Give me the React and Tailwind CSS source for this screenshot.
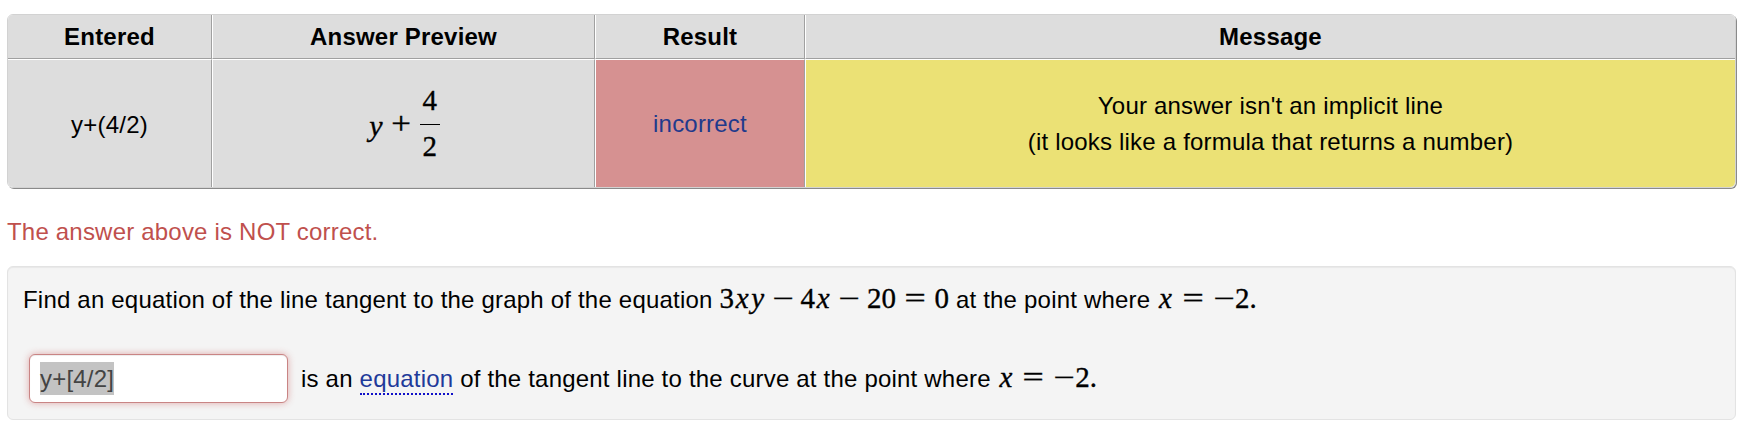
import React from "react";

const Var = ({ children, w }) => (
  <span className={"inline-block italic text-center " + w}>{children}</span>
);
const Bin = ({ children }) => (
  <span className="inline-block w-[0.778em] mx-[0.222em] text-center">
    <span className="inline-block scale-x-[1.3]">{children}</span>
  </span>
);
const Rel = ({ children }) => (
  <span className="inline-block w-[0.778em] mx-[0.278em] text-center">
    <span className="inline-block scale-x-[1.3]">{children}</span>
  </span>
);
const Neg = () => (
  <span className="inline-block w-[0.778em] text-center">
    <span className="inline-block scale-x-[1.3]">−</span>
  </span>
);

function Math({ children }) {
  return (
    <span className="font-['Liberation_Serif','Times_New_Roman',serif] text-[29px] leading-none whitespace-nowrap tracking-normal [-webkit-text-stroke:0.35px_black]">
      {children}
    </span>
  );
}

const X = () => <Var w="w-[0.572em]">x</Var>;
const Y = () => <Var w="w-[0.5em]">y</Var>;

export default function App() {
  return (
    <div className="w-[1744px] h-[424px] bg-white pt-[14px] pl-[7px] pr-[8px] font-['Liberation_Sans',Arial,sans-serif] text-[24px] tracking-[0.2px] text-black overflow-hidden">
      {/* Results table */}
      <div className="rounded-[6px] border border-[#d2d2d2] shadow-[1px_1px_0_#8a8a8a] overflow-hidden grid grid-cols-[204px_383px_210px_1fr]">
        {/* header */}
        <div className="h-[44px] bg-[#dddddd] border-b border-r border-[#a0a0a0] flex items-center justify-center font-bold">
          Entered
        </div>
        <div className="h-[44px] bg-[#dddddd] border-b border-r border-[#a0a0a0] border-l border-l-white flex items-center justify-center font-bold">
          Answer Preview
        </div>
        <div className="h-[44px] bg-[#dddddd] border-b border-r border-[#a0a0a0] border-l border-l-white flex items-center justify-center font-bold">
          Result
        </div>
        <div className="h-[44px] bg-[#dddddd] border-b border-[#a0a0a0] border-l border-l-white flex items-center justify-center font-bold">
          Message
        </div>
        {/* body */}
        <div className="h-[128px] bg-[#dddddd] border-t border-t-white border-r border-[#a0a0a0] flex items-center justify-center pt-[3px]">
          y+(4/2)
        </div>
        <div className="h-[128px] bg-[#dddddd] border-t border-t-white border-r border-[#a0a0a0] border-l border-l-white flex items-center justify-center pl-[2px]">
          <span className="inline-flex items-center font-['Liberation_Serif','Times_New_Roman',serif] text-[29px] leading-none tracking-normal [-webkit-text-stroke:0.35px_black]">
            <span className="inline-block italic w-[0.5em] mt-[4px] text-[30px]">y</span>
            <span className="inline-block w-[0.66em] ml-[0.26em] mr-[0.3em] text-center">
              <span className="inline-block scale-x-[1.2] scale-y-[1.1]">+</span>
            </span>
            <span className="inline-flex flex-col items-center">
              <span className="leading-none pb-[9px]">4</span>
              <span className="block w-[20px] h-[1.5px] bg-black"></span>
              <span className="leading-none pt-[7px]">2</span>
            </span>
          </span>
        </div>
        <div className="h-[128px] bg-[#d69191] border-t border-t-white border-r border-[#a0a0a0] border-l border-l-white flex items-center justify-center text-[#1f3a8c]">
          incorrect
        </div>
        <div className="h-[128px] bg-[#ebe175] border-t border-t-white border-l border-l-white flex flex-col items-center justify-center leading-[36px]">
          <div>Your answer isn't an implicit line</div>
          <div>(it looks like a formula that returns a number)</div>
        </div>
      </div>

      {/* status */}
      <div className="mt-[26px] leading-[36px] text-[#c0504d]">
        The answer above is NOT correct.
      </div>

      {/* problem box */}
      <div className="mt-[16px] h-[154px] rounded-[6px] border border-[#e3e3e3] bg-[#f4f4f4] shadow-[inset_0_1px_1px_rgba(0,0,0,0.05)] pl-[15px] pr-[16px] pt-[15px]">
        <div className="leading-[36px] whitespace-nowrap">
          Find an equation of the line tangent to the graph of the equation{" "}
          <Math>
            3<X />
            <Y />
            <Bin>−</Bin>4<X />
            <Bin>−</Bin>20<Rel>=</Rel>0
          </Math>{" "}
          at the point where{" "}
          <Math>
            <X />
            <Rel>=</Rel>
            <Neg />2.
          </Math>
        </div>
        <div className="mt-[36px] flex items-center whitespace-nowrap">
          <div className="ml-[6px] w-[259px] h-[49px] rounded-[6px] border border-[#c98484] bg-white shadow-[inset_0_1px_1px_rgba(0,0,0,0.075),0_0_7px_rgba(200,80,80,0.45)] flex items-center pl-[10px]">
            <span className="bg-[#c3c3c3] text-[#444] leading-[33px]">y+[4/2]</span>
          </div>
          <div className="ml-[13px] leading-[36px]">
            is an{" "}
            <span className="text-[#1f3a9a] border-b-2 border-dotted border-[#1010c8] pb-[1px]">
              equation
            </span>{" "}
            of the tangent line to the curve at the point where{" "}
            <Math>
              <X />
              <Rel>=</Rel>
              <Neg />2.
            </Math>
          </div>
        </div>
      </div>
    </div>
  );
}
